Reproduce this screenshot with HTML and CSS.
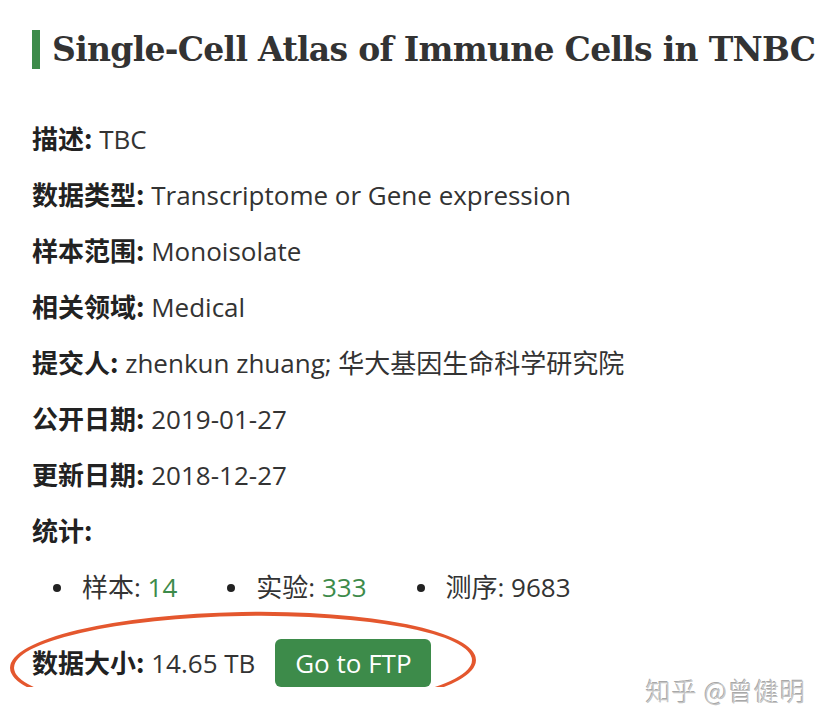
FILE: index.html
```html
<!DOCTYPE html>
<html lang="zh-CN">
<head>
    <meta charset="UTF-8">
    <meta name="viewport" content="width=device-width, initial-scale=1.0">
    <title>Single-Cell Atlas of Immune Cells in TNBC</title>
    <link rel="stylesheet" href="styles.css">
</head>
<body>
    <div class="page">
        <h1 class="title">Single-Cell Atlas of Immune Cells in TNBC</h1>

        <p class="field"><b>描述:</b> TBC</p>
        <p class="field"><b>数据类型:</b> Transcriptome or Gene expression</p>
        <p class="field"><b>样本范围:</b> Monoisolate</p>
        <p class="field"><b>相关领域:</b> Medical</p>
        <p class="field"><b>提交人:</b> zhenkun zhuang; 华大基因生命科学研究院</p>
        <p class="field"><b>公开日期:</b> 2019-01-27</p>
        <p class="field"><b>更新日期:</b> 2018-12-27</p>
        <p class="field"><b>统计:</b></p>

        <ul class="stats">
            <li>样本: <a class="num">14</a></li>
            <li>实验: <a class="num">333</a></li>
            <li>测序: 9683</li>
        </ul>

        <div class="size-row">
            <span><b>数据大小:</b> 14.65 TB</span>
            <button class="ftp-button">Go to FTP</button>
            <div class="mark"></div>
        </div>
    </div>

    <div class="watermark">知乎 @曾健明</div>
</body>
</html>
```

FILE: styles.css
```css
body {
    margin: 0;
    font-family: "Open Sans", "Noto Sans CJK SC", sans-serif;
    color: #333;
    background: #fff;
}

.page {
    padding: 30px 0 0 32px;
}

.title {
    margin: 0 0 52px 0;
    padding-left: 12px;
    border-left: 8px solid #3d8b4a;
    font-family: "DejaVu Serif", serif;
    font-size: 33px;
    letter-spacing: -0.7px;
    line-height: 39px;
    font-weight: bold;
    color: #333;
    white-space: nowrap;
}

.field {
    height: 36px;
    margin: 0 0 20px 0;
    font-size: 26px;
    line-height: 36px;
}

.field b,
.size-row b {
    color: #222;
    font-family: "Noto Sans CJK SC", sans-serif;
    font-weight: bold;
    line-height: 1;
}

.stats {
    display: flex;
    height: 36px;
    margin: 0;
    padding: 0 0 0 21px;
    list-style: none;
    font-size: 26px;
    line-height: 36px;
}

.stats li {
    margin-right: 50px;
}

.stats li::before {
    content: "";
    display: inline-block;
    width: 8px;
    height: 8px;
    margin: 0 21px 4px 0;
    border-radius: 50%;
    background: #222;
    vertical-align: middle;
}

.num {
    color: #3d8b4a;
    text-decoration: none;
}

.size-row {
    position: relative;
    display: flex;
    align-items: center;
    gap: 20px;
    height: 48px;
    margin-top: 34px;
    font-size: 26px;
    line-height: 36px;
}

.ftp-button {
    width: 156px;
    height: 48px;
    padding: 0;
    border: none;
    border-radius: 6px;
    background-color: #3d8b4a;
    color: #fff;
    font-family: "Open Sans", sans-serif;
    font-size: 26px;
    cursor: pointer;
}

.mark {
    position: absolute;
    left: -22px;
    top: -27px;
    width: 458px;
    height: 96px;
    border: 4px solid #e4572e;
    border-radius: 50%;
    transform: rotate(-1deg);
    pointer-events: none;
}

.watermark {
    position: absolute;
    right: 20px;
    top: 672px;
    font-family: "Noto Sans CJK SC", sans-serif;
    font-weight: 300;
    font-size: 25px;
    color: #c4c4c4;
    text-shadow: 1px 1px 0 #fff, -1px -1px 0 #a8a8a8;
    letter-spacing: 1px;
}
```
